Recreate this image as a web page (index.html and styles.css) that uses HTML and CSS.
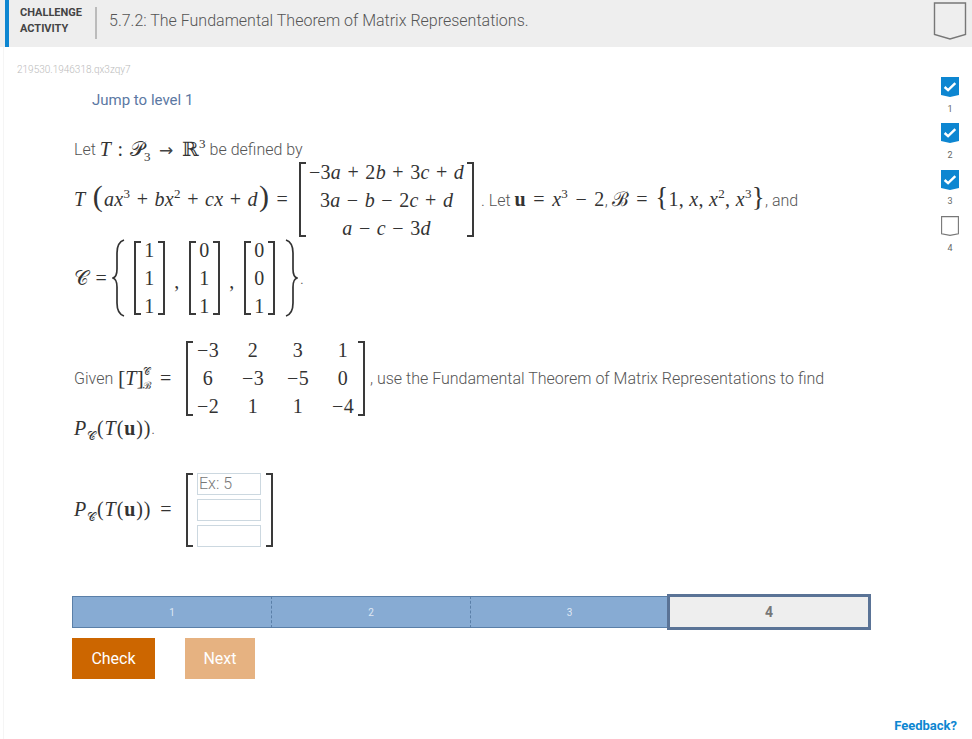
FILE: index.html
```html
<!DOCTYPE html>
<html lang="en">
<head>
<meta charset="utf-8">
<title>Challenge activity</title>
<link rel="stylesheet" href="styles.css">
</head>
<body>
<header class="top">
  <div class="accent"></div>
  <div class="label">CHALLENGE<br>ACTIVITY</div>
  <h1 class="title">5.7.2: The Fundamental Theorem of Matrix Representations.</h1>
  <svg class="big-shield" width="34" height="38" viewBox="0 0 34 38"><path d="M1.5 1h31v31.5L17 37 1.5 32.5z" fill="none" stroke="#777" stroke-width="1.4"/></svg>
</header>
<div class="page">
  <main class="main">
    <div class="code">219530.1946318.qx3zqy7</div>
    <div class="jump">Jump to level 1</div>

    <div class="line l1">Let&nbsp;<span class="m"><i>T</i> : <span class="cal">𝒫</span><sub>3</sub> <span class="arrow">→</span> ℝ<sup>3</sup></span>&nbsp;be defined by</div>

    <div class="line l2">
      <span class="m lead"><i>T</i> <span class="bigp">(</span><i>ax</i><sup>3</sup> + <i>bx</i><sup>2</sup> + <i>cx</i> + <i>d</i><span class="bigp">)</span> =</span>
      <span class="mat m1">
        <span class="lb"></span>
        <span class="cells one">
          <span>−3<i>a</i> + 2<i>b</i> + 3<i>c</i> + <i>d</i></span>
          <span>3<i>a</i> − <i>b</i> − 2<i>c</i> + <i>d</i></span>
          <span><i>a</i> − <i>c</i> − 3<i>d</i></span>
        </span>
        <span class="rb"></span>
      </span>
      <span class="after">. Let&nbsp;<span class="m"><b>u</b> = <i>x</i><sup>3</sup> − 2</span>,&nbsp;<span class="m"><span class="cal">ℬ</span> = <span class="set"><span class="medp">{</span>1, <i>x</i>, <i>x</i><sup>2</sup>, <i>x</i><sup>3</sup><span class="medp">}</span></span></span>, and</span>
    </div>

    <div class="line l3">
      <span class="m c-eq"><span class="cal">𝒞</span> =</span>
      <svg class="brace" width="13" height="78" viewBox="0 0 13 78"><path d="M12 1C6 3 5 8 5 14v16c0 5-1 8-4 9 3 1 4 4 4 9v16c0 6 1 11 7 13" fill="none" stroke="#333" stroke-width="1.7"/></svg>
      <span class="mat vec"><span class="lb"></span><span class="cells one"><span>1</span><span>1</span><span>1</span></span><span class="rb"></span></span>
      <span class="m comma">,</span>
      <span class="mat vec"><span class="lb"></span><span class="cells one"><span>0</span><span>1</span><span>1</span></span><span class="rb"></span></span>
      <span class="m comma">,</span>
      <span class="mat vec"><span class="lb"></span><span class="cells one"><span>0</span><span>0</span><span>1</span></span><span class="rb"></span></span>
      <svg class="brace right" width="13" height="78" viewBox="0 0 13 78"><path d="M1 1c6 2 7 7 7 13v16c0 5 1 8 4 9-3 1-4 4-4 9v16c0 6-1 11-7 13" fill="none" stroke="#333" stroke-width="1.7"/></svg>
      <span class="dot">.</span>
    </div>

    <div class="line l4">
      <span class="given">Given</span>
      <span class="m tm"><span class="medb">[</span><i>T</i><span class="medb">]</span></span>
      <span class="scripts m"><span class="cal">𝒞</span><span class="cal">ℬ</span></span>
      <span class="m eq">=</span>
      <span class="mat m2">
        <span class="lb"></span>
        <span class="cells four">
          <span>−3</span><span>2</span><span>3</span><span>1</span>
          <span>6</span><span>−3</span><span>−5</span><span>0</span>
          <span>−2</span><span>1</span><span>1</span><span>−4</span>
        </span>
        <span class="rb"></span>
      </span>
      <span class="after2">, use the Fundamental Theorem of Matrix Representations to find</span>
    </div>

    <div class="line l5"><span class="m"><i>P</i><sub class="cal">𝒞</sub>(<i>T</i>(<b>u</b>))</span>.</div>

    <div class="line l6">
      <span class="m pc"><i>P</i><sub class="cal">𝒞</sub>(<i>T</i>(<b>u</b>)) =</span>
      <span class="mat m3">
        <span class="lb"></span>
        <span class="inputs">
          <input type="text" placeholder="Ex: 5">
          <input type="text">
          <input type="text">
        </span>
        <span class="rb"></span>
      </span>
    </div>

    <div class="progress">
      <div class="seg first">1</div>
      <div class="seg">2</div>
      <div class="seg last">3</div>
      <div class="current">4</div>
    </div>

    <div class="buttons">
      <button class="btn check">Check</button>
      <button class="btn next">Next</button>
    </div>
  </main>
  <aside class="side">
    <div class="level"><svg width="18" height="20" viewBox="0 0 18 20"><path d="M0 0h18v18L9 20 0 18z" fill="#0d86d1"/><path d="M3.6 10l3.5 3.2 7.2-7" fill="none" stroke="#fff" stroke-width="2.4"/></svg><span>1</span></div>
    <div class="level"><svg width="18" height="20" viewBox="0 0 18 20"><path d="M0 0h18v18L9 20 0 18z" fill="#0d86d1"/><path d="M3.6 10l3.5 3.2 7.2-7" fill="none" stroke="#fff" stroke-width="2.4"/></svg><span>2</span></div>
    <div class="level"><svg width="18" height="20" viewBox="0 0 18 20"><path d="M0 0h18v18L9 20 0 18z" fill="#0d86d1"/><path d="M3.6 10l3.5 3.2 7.2-7" fill="none" stroke="#fff" stroke-width="2.4"/></svg><span>3</span></div>
    <div class="level"><svg width="18" height="20" viewBox="0 0 18 20"><path d="M.6.6h16.8v17.2L9 19.4.6 17.8z" fill="none" stroke="#777" stroke-width="1.1"/></svg><span>4</span></div>
  </aside>
</div>
<footer class="foot"><a class="feedback">Feedback?</a></footer>
</body>
</html>
```
FILE: styles.css
```css
html, body { margin: 0; padding: 0; }
body {
  width: 972px;
  height: 739px;
  overflow: hidden;
  background: #fff;
  font-family: Roboto, "Liberation Sans", sans-serif;
  font-weight: 300;
  font-size: 16px;
  color: #555;
  display: flex;
  flex-direction: column;
}
.top {
  height: 47px;
  flex: none;
  background: #eee;
  display: flex;
  align-items: center;
  padding-left: 5px;
  box-sizing: border-box;
}
.accent { width: 4px; height: 47px; background: #0d86d1; flex: none; }
.label {
  font-size: 11px;
  font-weight: 700;
  line-height: 16px;
  color: #444;
  margin: -6px 0 0 11px;
  width: 75px;
}
.title {
  flex: 1;
  margin: -2px 0 0;
  font-size: 16px;
  font-weight: 300;
  color: #555;
  height: 32px;
  line-height: 28px;
  border-left: 2px solid #bbb;
  padding-left: 12px;
}
.big-shield { margin-right: 5px; margin-top: -5px; flex: none; }
.page {
  flex: 1;
  display: flex;
  margin-left: 3px;
  border-left: 1px solid #f5f5f5;
}
.main { width: 936px; padding-left: 70px; box-sizing: border-box; }
.side { flex: 1; padding-top: 30px; display: flex; flex-direction: column; align-items: center; padding-right: 12px; }
.level { height: 46.4px; flex: none; display: flex; flex-direction: column; align-items: center; }
.level svg { display: block; }
.level span { font-size: 9px; line-height: 11px; margin-top: 6.5px; font-weight: 400; color: #666; }
.code { font-size: 10px; color: #bbb; margin: 17px 0 0 -57px; line-height: 12px; }
.jump { color: #5b78a3; font-size: 15px; margin: 14px 0 0 18px; line-height: 20px; font-weight: 400; }
.line { display: flex; align-items: center; white-space: nowrap; font-size: 16px; }
.m, .mat {
  font-family: "Liberation Serif", "DejaVu Serif", serif;
  font-size: 20px;
  color: #333;
  font-weight: 400;
  letter-spacing: .3px;
  word-spacing: 1px;
}
.m i { font-style: italic; }
.cal { font-style: normal; }
.m sup, .m sub { font-size: 13px; line-height: 0; }
.arrow { margin: 0 2px; font-family: "DejaVu Sans", sans-serif; font-size: 17px; color: #444; }
.l1 { margin-top: 27px; height: 24px; }
.l2 { margin-top: 1px; height: 75px; }
.lead { word-spacing: 1px; }
.bigp { font-size: 30px; line-height: 0; font-weight: 400; margin: 0 1px; }
.medp { font-size: 27px; line-height: 0; }
.medb { font-size: 22px; line-height: 0; }
.mat { display: flex; align-items: stretch; }
.lb, .rb { width: 7px; border: 2px solid #3a3a3a; box-sizing: border-box; flex: none; }
.lb { border-right: 0; }
.rb { border-left: 0; }
.cells { display: grid; grid-auto-rows: 28px; line-height: 28px; text-align: center; align-content: center; }
.m1 { margin-left: 11px; height: 75px; }
.m1 .cells { width: 161px; }
.after { margin: -3px 0 0 7px; }
.after .m { word-spacing: 2px; }
.after .set { word-spacing: 0; }
.l3 { margin-top: 4px; height: 74px; }
.c-eq { width: 30px; flex: none; }
.brace { margin-left: 8px; flex: none; }
.vec { height: 74px; margin-left: 9px; }
.vec .cells { width: 17px; }
.comma { width: 24px; flex: none; text-align: center; padding-top: 6px; margin-right: -9px; }
.brace.right { margin-left: 10px; }
.dot { margin-left: 2px; }
.l4 { margin-top: 26px; height: 75px; }
.given { width: 44px; flex: none; }
.tm { width: 25px; flex: none; letter-spacing: 0; }
.scripts { display: inline-flex; flex-direction: column; font-size: 10px; line-height: 14px; width: 17px; flex: none; }
.eq { width: 26px; flex: none; }
.m2 { height: 75px; }
.four { grid-template-columns: repeat(4, 30px); column-gap: 15px; width: 165px; padding-bottom: 2px; }
.after2 { margin-left: 5px; }
.l5 { margin-top: -1px; height: 26px; }
.l5 sub, .l6 sub { font-size: 12px; }
.l5 .m, .pc { letter-spacing: .9px; }
.l6 { margin-top: 31px; height: 75px; }
.pc { width: 112px; flex: none; word-spacing: 3px; }
.inputs { display: flex; flex-direction: column; gap: 4px; padding: 0 5px 0 4px; }
.inputs input {
  width: 64px;
  height: 22px;
  box-sizing: border-box;
  border: 1px solid #ccd8e0;
  padding: 0 1px;
  margin: 0;
  font: 300 16px Roboto, sans-serif;
  color: #555;
  background: #fff;
  outline: 0;
}
.inputs input::placeholder { color: #777; opacity: 1; }
.progress { display: flex; align-items: center; height: 36px; width: 799px; margin: 47px 0 0 -2px; }
.seg {
  width: 199px;
  height: 32px;
  box-sizing: border-box;
  background: #87abd3;
  border-top: 1px solid #5a7fa8;
  border-bottom: 1px solid #5a7fa8;
  border-right: 1px dashed #5a7fa8;
  color: #dfe8f3;
  font-size: 10px;
  font-weight: 400;
  display: flex;
  align-items: center;
  justify-content: center;
}
.seg.first { width: 200px; border-left: 1px solid #5a7fa8; }
.seg.last { width: 197px; border-right: 0; }
.current {
  flex: none;
  width: 204px;
  height: 36px;
  margin-left: -1px;
  box-sizing: border-box;
  border: 3px solid #5a7396;
  background: #eee;
  color: #777;
  font-size: 14px;
  font-weight: 700;
  display: flex;
  align-items: center;
  justify-content: center;
}
.buttons { display: flex; gap: 30px; margin: 8px 0 0 -2px; }
.btn { border: 0; height: 41px; color: #fff; font: 400 16px Roboto, sans-serif; padding: 0; }
.check { width: 83px; background: #cc6600; }
.next { width: 70px; background: #e6b281; }
.foot { height: 0; display: flex; justify-content: flex-end; padding-right: 15px; }
.feedback { color: #0d86d1; font-size: 13px; font-weight: 700; margin-top: -21px; line-height: 16px; }
```
